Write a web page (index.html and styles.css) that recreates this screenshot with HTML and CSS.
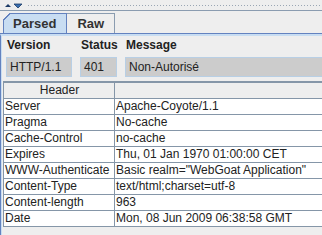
FILE: index.html
```html
<!DOCTYPE html>
<html lang="fr">
<head>
    <meta charset="UTF-8">
    <meta name="viewport" content="width=device-width, initial-scale=1.0">
    <title>Parsed response</title>
    <link rel="stylesheet" href="styles.css">
</head>
<body>

    <div class="splitbar">
        <svg class="arrows" width="22" height="5" viewBox="0 0 22 5">
            <polygon points="2,4 5,1 8,4" fill="#1c3a66"/>
            <polygon points="11,1 19,1 15,5" fill="#3a6fb0" stroke="#1c3a66" stroke-width="0.8"/>
        </svg>
        <span class="dots"></span>
    </div>

    <div class="tabs">
        <div class="tab active">Parsed</div>
        <div class="tab">Raw</div>
    </div>

    <div class="panel">
        <div class="status-line">
            <div class="label">Version</div>
            <div class="label">Status</div>
            <div class="label">Message</div>
            <div class="box">HTTP/1.1</div>
            <div class="box">401</div>
            <div class="box">Non-Autorisé</div>
        </div>

        <table class="headers">
            <thead>
                <tr>
                    <th class="col-name">Header</th>
                    <th></th>
                </tr>
            </thead>
            <tbody>
                <tr><td>Server</td><td>Apache-Coyote/1.1</td></tr>
                <tr><td>Pragma</td><td>No-cache</td></tr>
                <tr><td>Cache-Control</td><td>no-cache</td></tr>
                <tr><td>Expires</td><td>Thu, 01 Jan 1970 01:00:00 CET</td></tr>
                <tr><td>WWW-Authenticate</td><td>Basic realm="WebGoat Application"</td></tr>
                <tr><td>Content-Type</td><td>text/html;charset=utf-8</td></tr>
                <tr><td>Content-length</td><td>963</td></tr>
                <tr><td>Date</td><td>Mon, 08 Jun 2009 06:38:58 GMT</td></tr>
            </tbody>
        </table>
    </div>

</body>
</html>
```

FILE: styles.css
```css
body {
    margin: 0;
    background-color: #eeeeee;
    font-family: "Liberation Sans", Arial, sans-serif;
    font-size: 12px;
    color: #222222;
    overflow: hidden;
}
.splitbar {
    height: 10px;
    display: flex;
    align-items: center;
    border-bottom: 1px solid #8a9cb0;
    padding-left: 3px;
}
.arrows {
    display: block;
    flex: none;
}
.dots {
    flex: 1;
    height: 3px;
    margin-left: 2px;
    background-image: radial-gradient(circle, #9aa6b4 0.7px, transparent 0.9px);
    background-size: 3px 3px;
}
.tabs {
    display: flex;
    margin-top: 2px;
    padding-left: 3px;
    border-bottom: 1px solid #6382bf;
}
.tab {
    position: relative;
    height: 19px;
    line-height: 19px;
    border: 1px solid #8a9cb0;
    border-bottom: none;
    border-left: none;
    padding: 0 10px 0 10px;
    font-weight: bold;
    font-size: 13px;
    color: #333333;
}
.tab.active {
    background-color: #c8ddf2;
    border: 1px solid #6382bf;
    border-bottom: none;
    padding: 0 10px 0 9px;
}
.tab.active::before {
    content: "";
    position: absolute;
    left: -1px;
    top: -1px;
    width: 7px;
    height: 7px;
    background: linear-gradient(135deg, #eeeeee 45%, #6382bf 45%, #6382bf 58%, transparent 58%);
}
.panel {
    border-top: 2px solid #c8ddf2;
    border-left: 1px solid #6382bf;
    box-shadow: inset 1px 0 0 #c8ddf2;
    padding: 2px 0 8px 2px;
    overflow: hidden;
}
.status-line {
    display: grid;
    grid-template-columns: 66px 37px 1fr;
    column-gap: 8px;
    row-gap: 5px;
    margin-left: 3px;
    margin-right: -3px;
}
.label {
    font-weight: bold;
    line-height: 14px;
    padding-left: 1px;
}
.box {
    height: 18px;
    line-height: 18px;
    background-color: #cccccc;
    border: 1px solid #b8cfe5;
    padding-left: 3px;
}
.headers {
    margin-top: 4px;
    width: 330px;
    border-collapse: collapse;
    background: white;
    border-top: 2px solid #8596a8;
}
.headers th, .headers td {
    height: 15px;
    padding: 0 0 0 1px;
    border: 1px solid #8596a8;
    line-height: 15px;
    text-align: left;
    font-weight: normal;
    white-space: nowrap;
}
.headers th {
    background-color: #eeeeee;
    text-align: center;
}
.headers .col-name {
    width: 109px;
}
```
